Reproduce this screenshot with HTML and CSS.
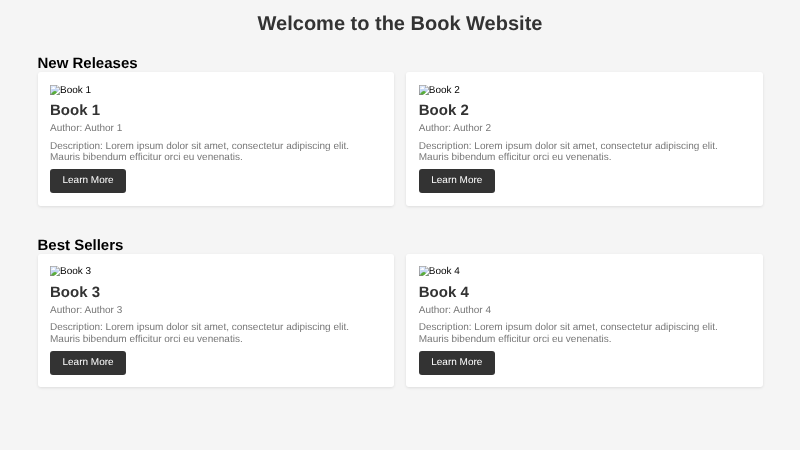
FILE: index.html
```html
<!DOCTYPE html>
<html lang="en">
<head>
<meta charset="utf-8">
<title>Book Website</title>
<link rel="stylesheet" href="styles.css">
</head>
<body>
<header class="site-header"><h1>Welcome to the Book Website</h1></header>
<main class="container">
<section class="section">
<h2>New Releases</h2>
<div class="grid">
<article class="card"><img class="cover" src="missing-1.jpg" alt="Book 1"><h3>Book 1</h3><p class="meta">Author: Author 1</p><p class="desc">Description: Lorem ipsum dolor sit amet, consectetur adipiscing elit. Mauris bibendum efficitur orci eu venenatis.</p><a class="btn" href="#">Learn More</a></article>
<article class="card"><img class="cover" src="missing-2.jpg" alt="Book 2"><h3>Book 2</h3><p class="meta">Author: Author 2</p><p class="desc">Description: Lorem ipsum dolor sit amet, consectetur adipiscing elit. Mauris bibendum efficitur orci eu venenatis.</p><a class="btn" href="#">Learn More</a></article>
</div>
</section>
<section class="section">
<h2>Best Sellers</h2>
<div class="grid">
<article class="card"><img class="cover" src="missing-3.jpg" alt="Book 3"><h3>Book 3</h3><p class="meta">Author: Author 3</p><p class="desc">Description: Lorem ipsum dolor sit amet, consectetur adipiscing elit. Mauris bibendum efficitur orci eu venenatis.</p><a class="btn" href="#">Learn More</a></article>
<article class="card"><img class="cover" src="missing-4.jpg" alt="Book 4"><h3>Book 4</h3><p class="meta">Author: Author 4</p><p class="desc">Description: Lorem ipsum dolor sit amet, consectetur adipiscing elit. Mauris bibendum efficitur orci eu venenatis.</p><a class="btn" href="#">Learn More</a></article>
</div>
</section>
</main>
</body>
</html>
```
FILE: styles.css
```css
* { box-sizing: border-box; }
html, body { margin: 0; padding: 0; }
body { background: #f5f5f5; font-family: "Liberation Sans", Arial, sans-serif; font-size: 10px; color: #000; overflow: hidden; text-rendering: geometricPrecision; }
.site-header { padding: 12.5px 0 .5px; text-align: center; will-change: transform; }
h1 { margin: 0; font-size: 20px; line-height: 23px; font-weight: 700; color: #333; }
.container { width: 100%; padding: 19px 37.5px 0; will-change: transform; }
.section { margin-bottom: 31px; }
h2 { margin: 0; font-size: 15px; line-height: 17px; font-weight: 700; color: #000; }
.grid { display: grid; grid-template-columns: 1fr 1fr; gap: 12.5px; }
.card { background: #fff; border-radius: 3px; padding: 12.5px; box-shadow: 0 1px 3px rgba(0,0,0,.1); }
.cover { display: block; zoom: .625; font-size: 16px; line-height: 18.4px; }
h3 { margin: 6px 0 0; font-size: 15px; line-height: 17px; font-weight: 700; color: #333; }
.meta, .desc { margin: 0; font-size: 10px; line-height: 11.5px; color: #777; }
.meta { margin-top: 4px; }
.desc { margin-top: 6px; }
.btn { display: block; width: fit-content; margin-top: 5.5px; padding: 6.25px 12.5px; background: #333; color: #fff; border-radius: 3px; font-size: 10px; line-height: 11.5px; text-decoration: none; }
```
